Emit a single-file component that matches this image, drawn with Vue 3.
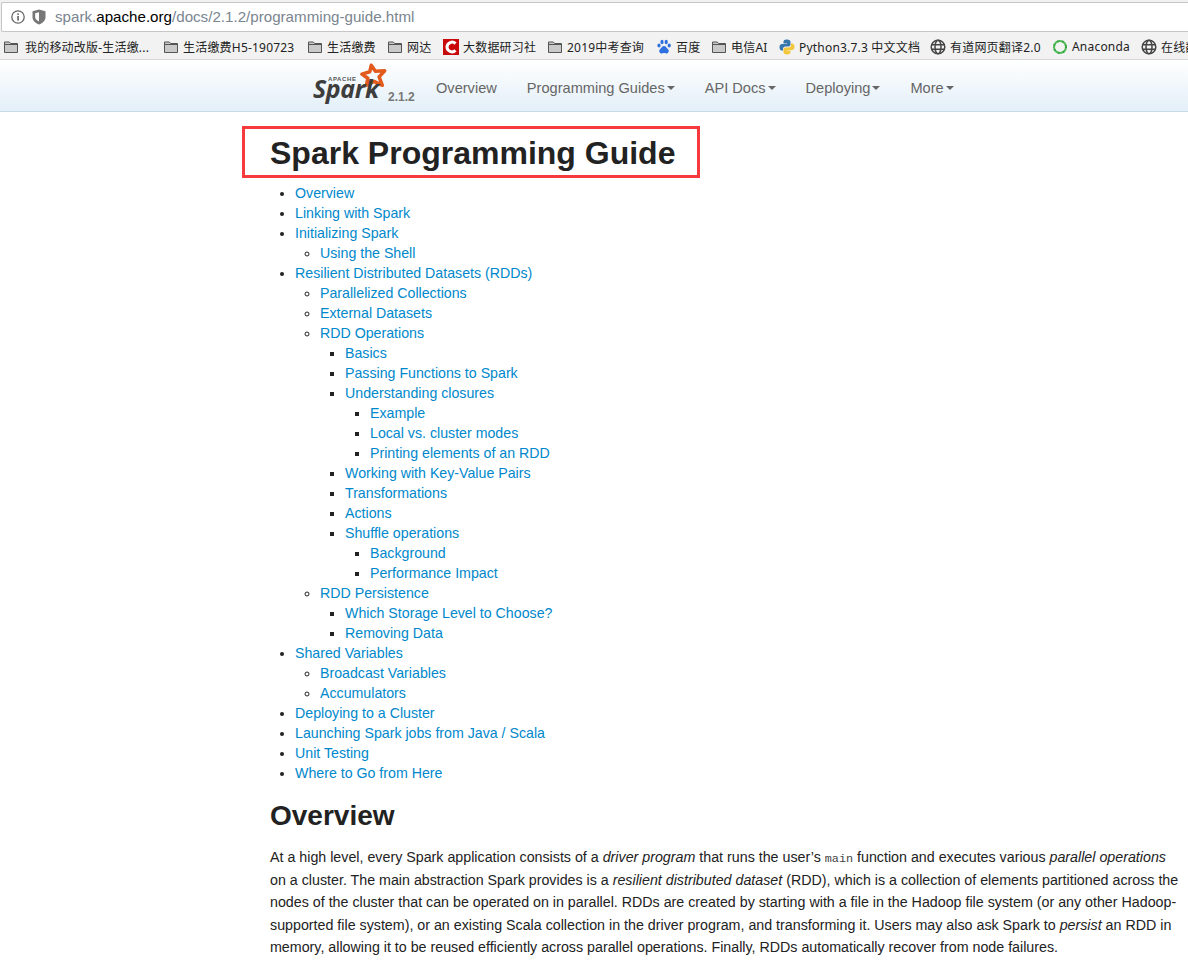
<script setup>
// widths are the slot each bookmark takes on the bar
const bookmarks = [
  { icon: 'folder', label: '我的移动改版-生活缴...', width: 160 },
  { icon: 'folder', label: '生活缴费H5-190723', width: 144 },
  { icon: 'folder', label: '生活缴费', width: 80 },
  { icon: 'folder', label: '网达', width: 56 },
  { icon: 'csdn', label: '大数据研习社', width: 104 },
  { icon: 'folder', label: '2019中考查询', width: 109 },
  { icon: 'baidu', label: '百度', width: 55 },
  { icon: 'folder', label: '电信AI', width: 68 },
  { icon: 'python', label: 'Python3.7.3 中文文档', width: 151 },
  { icon: 'globe', label: '有道网页翻译2.0', width: 122 },
  { icon: 'anaconda', label: 'Anaconda', width: 89 },
  { icon: 'globe', label: '在线翻译', width: 80 },
];

const navItems = [
  { label: 'Overview', caret: false },
  { label: 'Programming Guides', caret: true },
  { label: 'API Docs', caret: true },
  { label: 'Deploying', caret: true },
  { label: 'More', caret: true },
];
</script>

<template>
  <div class="page">
    <div class="addressbar">
      <div class="addressbox">
        <svg class="info" width="16" height="16" viewBox="0 0 16 16">
          <circle cx="8" cy="8" r="6.200" fill="none" stroke="#666" stroke-width="1.300" />
          <rect x="7.300" y="7" width="1.500" height="4.600" fill="#555" />
          <rect x="7.300" y="4.400" width="1.500" height="1.500" fill="#555" />
        </svg>
        <svg class="shield" width="14" height="16" viewBox="0 0 14 16">
          <path d="M.5 2.200 7 .5l6.500 1.700v6c0 3.400-2.800 5.700-6.500 7.300C3.300 13.900.5 11.600.5 8.200z" fill="#777" />
          <path d="M3.200 4.200 7 3.200v9.300C4.600 11.200 3.200 10 3.200 8.200z" fill="#fff" />
        </svg>
        <span class="url">spark.<b>apache.org</b>/docs/2.1.2/programming-guide.html</span>
      </div>
    </div>

    <div class="bookmarks">
      <div v-for="(b, i) in bookmarks" :key="i" class="bookmark" :style="{ width: b.width + 'px' }">
        <svg v-if="b.icon === 'folder'" width="16" height="16" viewBox="0 0 16 16">
          <path d="M1.500 13.500V3h4.800l1.200 1.500h7v9z" fill="#c9c9c9" stroke="#555" stroke-width="1" />
          <path d="M1.500 5.500h13" stroke="#555" stroke-width="1" />
        </svg>
        <svg v-else-if="b.icon === 'csdn'" width="16" height="16" viewBox="0 0 16 16">
          <rect width="16" height="16" fill="#c90a0a" />
          <path d="M12.500 4.600A5 5 0 0 0 4 8a5 5 0 0 0 8.500 3.400" fill="none" stroke="#fff" stroke-width="3" />
        </svg>
        <svg v-else-if="b.icon === 'baidu'" width="16" height="16" viewBox="0 0 16 16" fill="#2f6fe0">
          <ellipse cx="3" cy="6.500" rx="1.600" ry="2.100" />
          <ellipse cx="6" cy="3" rx="1.600" ry="2.200" />
          <ellipse cx="10.200" cy="3" rx="1.600" ry="2.200" />
          <ellipse cx="13.200" cy="6.500" rx="1.600" ry="2.100" />
          <path d="M8 7c2 0 2.600 2 4 3.200 1.500 1.500.6 4.300-1.700 4.300-1 0-1.500-.4-2.300-.4s-1.300.4-2.300.4C3.400 14.500 2.500 11.700 4 10.200 5.400 9 6 7 8 7z" />
        </svg>
        <svg v-else-if="b.icon === 'python'" width="16" height="16" viewBox="0 0 16 16">
          <path d="M8 .5c-3 0-3.500 1.200-3.500 2.500v1.500H8V5H3C1.500 5 .5 6.200.5 8.200c0 2 1 3.300 2.300 3.300h1.200V9.800C4 8.500 5 7.500 6.300 7.500h3.400c1 0 1.800-.8 1.800-1.900V3C11.500 1.500 10.500.5 8 .5z" fill="#3776ab" />
          <path d="M8 15.500c3 0 3.500-1.200 3.500-2.500v-1.500H8V11h5c1.500 0 2.500-1.200 2.500-3.200 0-2-1-3.300-2.300-3.300H12v1.700c0 1.300-1 2.300-2.300 2.300H6.300c-1 0-1.800.8-1.800 1.900V13c0 1.500 1 2.500 3.500 2.500z" fill="#f2c73c" />
        </svg>
        <svg v-else-if="b.icon === 'globe'" width="16" height="16" viewBox="0 0 16 16" fill="none" stroke="#444" stroke-width="1.500">
          <circle cx="8" cy="8" r="6.800" />
          <ellipse cx="8" cy="8" rx="3" ry="6.800" />
          <path d="M1.500 5.700h13M1.500 10.300h13" />
        </svg>
        <svg v-else width="16" height="16" viewBox="0 0 16 16" fill="none">
          <circle cx="8" cy="8" r="6" stroke="#4dbb55" stroke-width="2" />
          <circle cx="8" cy="8" r="6" stroke="#2f9a3c" stroke-width="2" stroke-dasharray="1 4" />
        </svg>
        <span>{{ b.label }}</span>
      </div>
    </div>

    <nav class="navbar">
      <div class="brand">
        <span class="logo">
          <svg class="star" width="28" height="26" viewBox="0 0 30 28">
            <path d="M12 2.500 16.500 9l10-.7-6 6.700L24 24l-9-4.200-8 4 1.300-7.400L2 12l8.500-2.600z" fill="none" stroke="#e25a1c" stroke-width="3.800" stroke-linejoin="round" />
          </svg>
          <span class="apache">APACHE</span>
          <span class="spark">Spark</span>
        </span>
        <span class="version">2.1.2</span>
      </div>
      <a v-for="item in navItems" :key="item.label" class="navlink" :class="{ caret: item.caret }">{{ item.label }}</a>
    </nav>

    <main class="content">
      <h1><span>Spark Programming Guide</span></h1>
      <ul class="toc">
        <li><a>Overview</a></li>
        <li><a>Linking with Spark</a></li>
        <li><a>Initializing Spark</a>
          <ul>
            <li><a>Using the Shell</a></li>
          </ul>
        </li>
        <li><a>Resilient Distributed Datasets (RDDs)</a>
          <ul>
            <li><a>Parallelized Collections</a></li>
            <li><a>External Datasets</a></li>
            <li><a>RDD Operations</a>
              <ul>
                <li><a>Basics</a></li>
                <li><a>Passing Functions to Spark</a></li>
                <li><a>Understanding closures</a>
                  <ul>
                    <li><a>Example</a></li>
                    <li><a>Local vs. cluster modes</a></li>
                    <li><a>Printing elements of an RDD</a></li>
                  </ul>
                </li>
                <li><a>Working with Key-Value Pairs</a></li>
                <li><a>Transformations</a></li>
                <li><a>Actions</a></li>
                <li><a>Shuffle operations</a>
                  <ul>
                    <li><a>Background</a></li>
                    <li><a>Performance Impact</a></li>
                  </ul>
                </li>
              </ul>
            </li>
            <li><a>RDD Persistence</a>
              <ul>
                <li><a>Which Storage Level to Choose?</a></li>
                <li><a>Removing Data</a></li>
              </ul>
            </li>
          </ul>
        </li>
        <li><a>Shared Variables</a>
          <ul>
            <li><a>Broadcast Variables</a></li>
            <li><a>Accumulators</a></li>
          </ul>
        </li>
        <li><a>Deploying to a Cluster</a></li>
        <li><a>Launching Spark jobs from Java / Scala</a></li>
        <li><a>Unit Testing</a></li>
        <li><a>Where to Go from Here</a></li>
      </ul>

      <h2>Overview</h2>
      <p>
        At a high level, every Spark application consists of a <em>driver program</em> that runs the user’s
        <code>main</code> function and executes various <em>parallel operations</em> on a cluster. The main
        abstraction Spark provides is a <em>resilient distributed dataset</em> (RDD), which is a collection of
        elements partitioned across the nodes of the cluster that can be operated on in parallel. RDDs are created
        by starting with a file in the Hadoop file system (or any other Hadoop-supported file system), or an
        existing Scala collection in the driver program, and transforming it. Users may also ask Spark to
        <em>persist</em> an RDD in memory, allowing it to be reused efficiently across parallel operations.
        Finally, RDDs automatically recover from node failures.
      </p>
    </main>
  </div>
</template>

<style>
html,
body {
  overflow: hidden;
  background: #fff;
}
</style>

<style scoped>
.page {
  width: 1188px;
  height: 964px;
  overflow: hidden;
  font-family: "Liberation Sans", Arial, sans-serif;
  font-size: 14.2px;
  color: #222;
}

.addressbar {
  height: 32px;
  padding: 2px 0 0 1px;
  box-sizing: border-box;
  background: #f1f1f1;
}

.addressbox {
  height: 30px;
  box-sizing: border-box;
  display: flex;
  align-items: center;
  padding-left: 8px;
  background: #fff;
  border: 1px solid #c6c6c6;
  border-right: 0;
  border-radius: 2px 0 0 2px;
}

.shield {
  margin-left: 6px;
}

.url {
  margin: -2px 0 0 9px;
  font-size: 15.15px;
  color: #7a8590;
}

.url b {
  font-weight: normal;
  color: #000;
}

.bookmarks {
  height: 28px;
  box-sizing: border-box;
  display: flex;
  align-items: center;
  padding: 2px 0 0 3px;
  background: #f2f2f2;
  border-bottom: 1px solid #d8d8d8;
  white-space: nowrap;
  overflow: hidden;
}

.bookmark {
  display: flex;
  align-items: center;
  gap: 4px;
  flex-shrink: 0;
  font-family: "Noto Sans", "Noto Sans CJK SC", sans-serif;
  font-size: 12px;
  letter-spacing: 0.2px;
  color: #222;
}

.bookmark:first-child {
  gap: 6px;
}

.navbar {
  height: 52px;
  box-sizing: border-box;
  display: flex;
  align-items: center;
  padding: 5px 0 0 310px;
  background: linear-gradient(to bottom, #fff, #e3eff8);
  border-bottom: 1px solid #c8dbe6;
}

.brand {
  display: flex;
  align-items: flex-end;
  width: 126px;
  height: 42px;
}

.logo {
  position: relative;
  display: block;
  width: 78px;
  height: 42px;
}

.star {
  position: absolute;
  left: 50px;
  top: -4px;
}

.apache {
  position: absolute;
  left: 18px;
  top: 9px;
  font-size: 6px;
  line-height: 1;
  font-weight: bold;
  letter-spacing: 0.6px;
  color: #555;
}

.spark {
  position: absolute;
  left: 3px;
  top: 9px;
  font-family: "Open Sans", sans-serif;
  font-size: 25px;
  line-height: 1;
  font-weight: 700;
  font-style: italic;
  letter-spacing: -0.4px;
  color: #3d3d3d;
}

.version {
  margin-bottom: 5px;
  font-size: 12px;
  font-weight: bold;
  color: #777;
}

.navlink {
  margin-right: 30px;
  font-size: 14.6px;
  color: #666;
}

.caret::after {
  content: "";
  display: inline-block;
  margin-left: 2px;
  vertical-align: 3px;
  border-top: 4px solid #666;
  border-left: 4.500px solid transparent;
  border-right: 4.500px solid transparent;
}

.content {
  width: 912px;
  margin-left: 270px;
}

h1 {
  margin: 14px 0 5px -28px;
  line-height: 1;
}

h1 span {
  display: inline-block;
  box-sizing: border-box;
  width: 458px;
  height: 52px;
  padding-left: 25px;
  border: 3px solid #f63a3e;
  font-size: 32px;
  line-height: 49px;
  font-weight: bold;
  color: #222;
}

ul {
  margin: 0;
  padding-left: 25px;
  line-height: 20px;
}

li a {
  color: #0088cc;
}

h2 {
  margin: 16px 0 0;
  font-size: 28px;
  line-height: 34px;
  font-weight: bold;
  color: #222;
}

p {
  margin: 13.4px 0 0;
  font-size: 14.25px;
  line-height: 22.4px;
  color: #222;
}

code {
  font-family: "Liberation Mono", monospace;
  font-size: 11.8px;
  line-height: 1;
  color: #444;
}
</style>
